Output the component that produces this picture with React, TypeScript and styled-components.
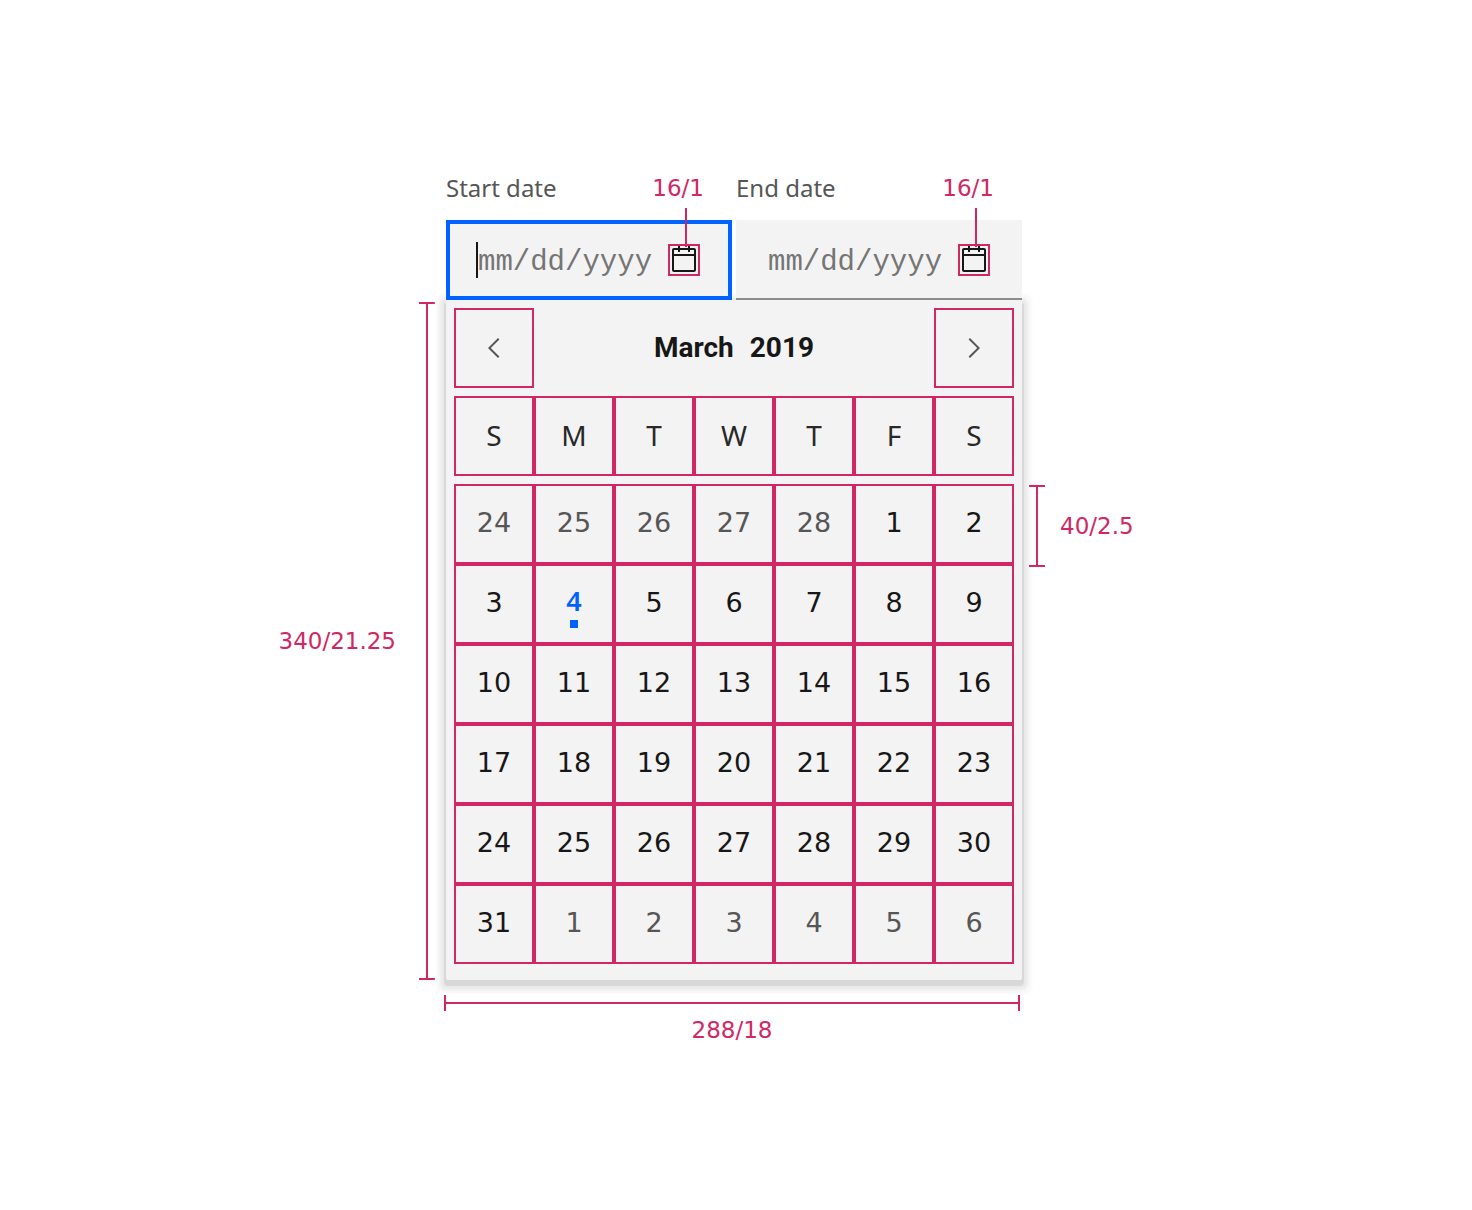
import React from "react";
import styled, { createGlobalStyle } from "styled-components";

const magenta = "#d12765";
const blue = "#0062ff";
const surface = "#f3f3f3";
const textFont = `"Noto Sans", "Open Sans", sans-serif`;
const figureFont = `"DejaVu Sans", "Noto Sans", sans-serif`;
const monoFont = `"Liberation Mono", "DejaVu Sans Mono", monospace`;

const GlobalStyle = createGlobalStyle`
  *, *::before, *::after { box-sizing: border-box; }
  body { margin: 0; background: #ffffff; font-family: ${textFont}; color: #171717; }
  button, input { font: inherit; color: inherit; border: 0; border-radius: 0; margin: 0; padding: 0; background: none; outline: 0; }
`;

const Page = styled.main`
  display: grid;
  grid-template-columns: 1fr minmax(0, 576px) 1fr;
  padding: 172px 20px 160px 16px;
`;

const Fields = styled.div`
  grid-column: 2;
  display: grid;
  grid-template-columns: repeat(2, minmax(0, 1fr));
  gap: 4px;
  position: relative;
  z-index: 1;
`;

const FieldHeader = styled.div`
  display: flex;
  justify-content: space-between;
  align-items: center;
  height: 32px;
  margin-bottom: 16px;
  padding-right: 28px;
`;

const FieldLabel = styled.label`
  font-size: 24px;
  line-height: 32px;
  color: #565656;
`;

const Note = styled.span`
  font-family: ${figureFont};
  font-size: 23px;
  line-height: 32px;
  color: ${magenta};
`;

const FieldBox = styled.div<{ $active?: boolean }>`
  position: relative;
  display: flex;
  align-items: center;
  height: 80px;
  padding: 0 32px;
  background: ${surface};
  box-shadow: ${(p) => (p.$active ? `inset 0 0 0 4px ${blue}` : "inset 0 -2px 0 #8c8c8c")};
`;

const DateInput = styled.input`
  flex: 1;
  min-width: 0;
  height: 44px;
  padding-top: 4px;
  font-family: ${monoFont};
  font-size: 29px;
  line-height: 40px;

  &::placeholder {
    color: #757575;
    opacity: 1;
  }
`;

const Caret = styled.span`
  position: absolute;
  left: 30px;
  top: 22px;
  width: 2px;
  height: 36px;
  background: #171717;
`;

const IconButton = styled.button`
  position: relative;
  flex: none;
  width: 32px;
  height: 32px;
  box-shadow: inset 0 0 0 2px ${magenta};

  svg {
    display: block;
  }
`;

const Leader = styled.span`
  position: absolute;
  left: 17px;
  bottom: 29px;
  width: 2px;
  height: 39px;
  background: ${magenta};
`;

const Panel = styled.section`
  grid-column: 2;
  display: grid;
  gap: 8px;
  padding: 8px 8px 16px;
  background: ${surface};
  border-radius: 2px;
  box-shadow:
    0 4px 1px 2px #d8d8d8,
    0 4px 3px 6px #ebebeb,
    0 4px 3px 10px #f9f9f9;
`;

const MonthBar = styled.header`
  display: flex;
  justify-content: space-between;
  align-items: center;
`;

const NavButton = styled.button`
  display: grid;
  place-items: center;
  width: 80px;
  height: 80px;
  border: 2px solid ${magenta};
  color: #565656;
`;

const MonthTitle = styled.h2`
  display: flex;
  gap: 16px;
  margin: 0;
  font-family: Roboto, ${textFont};
  font-size: 28px;
  line-height: 40px;
  font-weight: 700;
`;

const Calendar = styled.table`
  display: grid;
  gap: 8px;

  thead, tbody {
    display: block;
  }
`;

const Week = styled.tr`
  display: grid;
  grid-template-columns: repeat(7, 1fr);
`;

const Weekday = styled.th`
  height: 80px;
  padding: 0;
  border: 2px solid ${magenta};
  font-size: 28px;
  line-height: 74px;
  font-weight: 400;
  text-align: center;
  color: #282828;
`;

const DayCell = styled.td`
  height: 80px;
  padding: 0;
  border: 2px solid ${magenta};
`;

const DayButton = styled.button<{ $muted: boolean; $today: boolean }>`
  position: relative;
  display: block;
  width: 100%;
  height: 100%;
  padding-bottom: ${(p) => (p.$today ? 8 : 4)}px;
  font-family: ${(p) => (p.$today ? textFont : figureFont)};
  font-size: 27px;
  font-weight: ${(p) => (p.$today ? 600 : 400)};
  color: ${(p) => (p.$today ? blue : p.$muted ? "#565656" : "#171717")};
`;

const TodayMark = styled.span`
  position: absolute;
  left: 34px;
  bottom: 14px;
  width: 8px;
  height: 8px;
  background: ${blue};
`;

const HeightNote = styled.aside`
  grid-column: 1;
  display: flex;
  justify-content: flex-end;
  align-items: center;
  gap: 23px;
  margin: 2px 11px 0 0;
`;

const RowNote = styled.aside`
  grid-column: 3;
  align-self: start;
  display: flex;
  align-items: center;
  gap: 15px;
  height: 82px;
  margin: 185px 0 0 7px;
`;

const WidthNote = styled.aside`
  grid-column: 2;
  display: grid;
  justify-items: center;
  gap: 3px;
  margin: 15px 2px 0 -2px;
`;

const Bracket = styled.span`
  display: grid;
  justify-items: center;
  align-self: stretch;
  width: 16px;
  border: solid ${magenta};
  border-width: 2px 0;

  &::before {
    content: "";
    width: 2px;
    background: ${magenta};
  }
`;

const WideBracket = styled.span`
  display: grid;
  align-items: center;
  justify-self: stretch;
  height: 16px;
  border: solid ${magenta};
  border-width: 0 2px;

  &::before {
    content: "";
    height: 2px;
    background: ${magenta};
  }
`;

const CalendarIcon = () => (
  <svg width="32" height="32" viewBox="0 0 32 32" fill="#171717" aria-hidden="true">
    <path d="M26 4h-4V2h-2v2h-8V2h-2v2H6c-1.1 0-2 .9-2 2v20c0 1.1.9 2 2 2h20c1.1 0 2-.9 2-2V6c0-1.1-.9-2-2-2zm0 22H6V12h20v14zm0-16H6V6h4v2h2V6h8v2h2V6h4v4z" />
  </svg>
);

const Chevron = ({ next }: { next?: boolean }) => (
  <svg width="32" height="32" viewBox="0 0 16 16" fill="currentColor" aria-hidden="true">
    <path d={next ? "M11 8l-5 5-.7-.7L9.6 8 5.3 3.7 6 3z" : "M5 8l5-5 .7.7L6.4 8l4.3 4.3-.7.7z"} />
  </svg>
);

const DateField = ({ id, label, active }: { id: string; label: string; active?: boolean }) => (
  <div>
    <FieldHeader>
      <FieldLabel htmlFor={id}>{label}</FieldLabel>
      <Note>16/1</Note>
    </FieldHeader>
    <FieldBox $active={active}>
      {active && <Caret />}
      <DateInput id={id} type="text" placeholder="mm/dd/yyyy" />
      <IconButton type="button" aria-label={`Open calendar for ${label}`}>
        <CalendarIcon />
        <Leader />
      </IconButton>
    </FieldBox>
  </div>
);

const weekdays = ["S", "M", "T", "W", "T", "F", "S"];
const today = 4;

// March 2019 starts on a Friday, after five days of February.
const days = Array.from({ length: 42 }, (_, i) => {
  if (i < 5) return { day: 24 + i, muted: true };
  if (i < 36) return { day: i - 4, muted: false };
  return { day: i - 35, muted: true };
});
const weeks = Array.from({ length: 6 }, (_, w) => days.slice(w * 7, w * 7 + 7));

export default function App() {
  return (
    <>
      <GlobalStyle />
      <Page>
        <Fields>
          <DateField id="start-date" label="Start date" active />
          <DateField id="end-date" label="End date" />
        </Fields>

        <HeightNote>
          <Note>340/21.25</Note>
          <Bracket />
        </HeightNote>

        <Panel>
          <MonthBar>
            <NavButton type="button" aria-label="Previous month">
              <Chevron />
            </NavButton>
            <MonthTitle>
              <span>March</span>
              <span>2019</span>
            </MonthTitle>
            <NavButton type="button" aria-label="Next month">
              <Chevron next />
            </NavButton>
          </MonthBar>
          <Calendar cellSpacing={0}>
            <thead>
              <Week>
                {weekdays.map((name, i) => (
                  <Weekday key={i} scope="col">{name}</Weekday>
                ))}
              </Week>
            </thead>
            <tbody>
              {weeks.map((week, w) => (
                <Week key={w}>
                  {week.map(({ day, muted }) => {
                    const isToday = day === today && !muted;
                    return (
                      <DayCell key={day}>
                        <DayButton type="button" $muted={muted} $today={isToday}>
                          {day}
                          {isToday && <TodayMark />}
                        </DayButton>
                      </DayCell>
                    );
                  })}
                </Week>
              ))}
            </tbody>
          </Calendar>
        </Panel>

        <RowNote>
          <Bracket />
          <Note>40/2.5</Note>
        </RowNote>

        <WidthNote>
          <WideBracket />
          <Note>288/18</Note>
        </WidthNote>
      </Page>
    </>
  );
}
